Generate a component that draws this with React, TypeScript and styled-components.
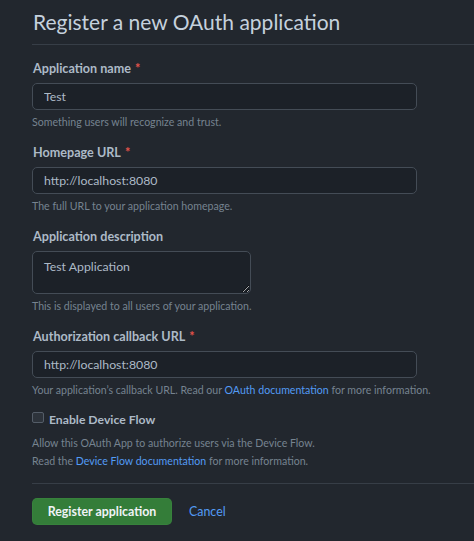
import React from "react";
import styled, { createGlobalStyle } from "styled-components";

const Global = createGlobalStyle`
  html, body {
    margin: 0;
    padding: 0;
    background: #22272e;
    color-scheme: dark;
  }
  body {
    font-family: Lato, "Noto Sans", sans-serif;
    color: #adbac7;
    width: 474px;
    height: 541px;
    overflow: hidden;
  }
`;

const Page = styled.div`
  padding-left: 32px;
`;

const Header = styled.div`
  padding: 7px 0 7px 1px;
  border-bottom: 1px solid #373e47;
`;

const Title = styled.h2`
  margin: 0;
  font-size: 21px;
  line-height: 30px;
  font-weight: 400;
  color: #c5d1dd;
  white-space: nowrap;
`;

const Form = styled.form`
  display: flex;
  flex-direction: column;
  padding-top: 15px;
`;

const Group = styled.div`
  display: flex;
  flex-direction: column;
  margin-bottom: 14px;
`;

const Label = styled.label`
  font-size: 12.6px;
  line-height: 18px;
  font-weight: 700;
  color: #adbac7;
  margin-bottom: 5px;
  padding-left: 1px;
`;

const Required = styled.span`
  color: #e5534b;
  margin-left: 4px;
`;

const Input = styled.input`
  box-sizing: border-box;
  width: 385px;
  height: 27px;
  padding: 0 11px;
  background: #1c2128;
  border: 1px solid #444c56;
  border-radius: 5px;
  color: #adbac7;
  font-family: inherit;
  font-size: 12.3px;
  outline: none;
`;

const TextArea = styled.textarea`
  box-sizing: border-box;
  width: 219px;
  height: 43px;
  padding: 6px 11px;
  background: #1c2128;
  border: 1px solid #444c56;
  border-radius: 5px;
  color: #adbac7;
  font-family: inherit;
  font-size: 12.3px;
  line-height: 18px;
  resize: vertical;
  outline: none;
`;

const Note = styled.p`
  margin: 4px 0 0;
  font-size: 10.6px;
  line-height: 16px;
  color: #768390;
  white-space: nowrap;
`;

const Link = styled.a`
  color: #539bf5;
  text-decoration: none;
`;

const CheckRow = styled.label`
  display: flex;
  align-items: center;
  gap: 5px;
  height: 20px;
  margin-top: -3px;
  font-size: 12.2px;
  font-weight: 700;
  color: #adbac7;
`;

const Box = styled.span`
  box-sizing: border-box;
  width: 12px;
  height: 11px;
  border: 1px solid #545d68;
  border-radius: 2px;
  background: #2d333b;
  margin-top: -3px;
`;

const Para = styled.p<{ $gap: number }>`
  margin: ${(p) => p.$gap}px 0 0;
  font-size: 10.6px;
  line-height: 16px;
  color: #768390;
  white-space: nowrap;
`;

const Divider = styled.hr`
  margin: 14px 0 14px;
  border: 0;
  border-top: 1px solid #373e47;
`;

const Actions = styled.div`
  display: flex;
  align-items: center;
  gap: 17px;
`;

const Primary = styled.button`
  box-sizing: border-box;
  width: 140px;
  height: 27px;
  background: #347d39;
  border: 1px solid #46954a33;
  border-radius: 5px;
  color: #f0f3f6;
  font-family: inherit;
  font-size: 12.4px;
  font-weight: 700;
  padding: 0;
`;

const Cancel = styled.a`
  color: #539bf5;
  font-size: 12.4px;
  text-decoration: none;
`;

export default function App() {
  return (
    <>
      <Global />
      <Page>
        <Header>
          <Title>Register a new OAuth application</Title>
        </Header>
        <Form onSubmit={(e) => e.preventDefault()}>
          <Group>
            <Label>
              Application name<Required>*</Required>
            </Label>
            <Input defaultValue="Test" />
            <Note>Something users will recognize and trust.</Note>
          </Group>
          <Group>
            <Label>
              Homepage URL<Required>*</Required>
            </Label>
            <Input defaultValue="http://localhost:8080" />
            <Note>The full URL to your application homepage.</Note>
          </Group>
          <Group>
            <Label>Application description</Label>
            <TextArea defaultValue="Test Application" />
            <Note>This is displayed to all users of your application.</Note>
          </Group>
          <Group>
            <Label>
              Authorization callback URL<Required>*</Required>
            </Label>
            <Input defaultValue="http://localhost:8080" />
            <Note>
              Your application’s callback URL. Read our{" "}
              <Link href="#">OAuth documentation</Link> for more information.
            </Note>
          </Group>
          <CheckRow>
            <Box />
            Enable Device Flow
          </CheckRow>
          <Para $gap={6}>Allow this OAuth App to authorize users via the Device Flow.</Para>
          <Para $gap={2}>
            Read the <Link href="#">Device Flow documentation</Link> for more information.
          </Para>
          <Divider />
          <Actions>
            <Primary type="button">Register application</Primary>
            <Cancel href="#">Cancel</Cancel>
          </Actions>
        </Form>
      </Page>
    </>
  );
}
